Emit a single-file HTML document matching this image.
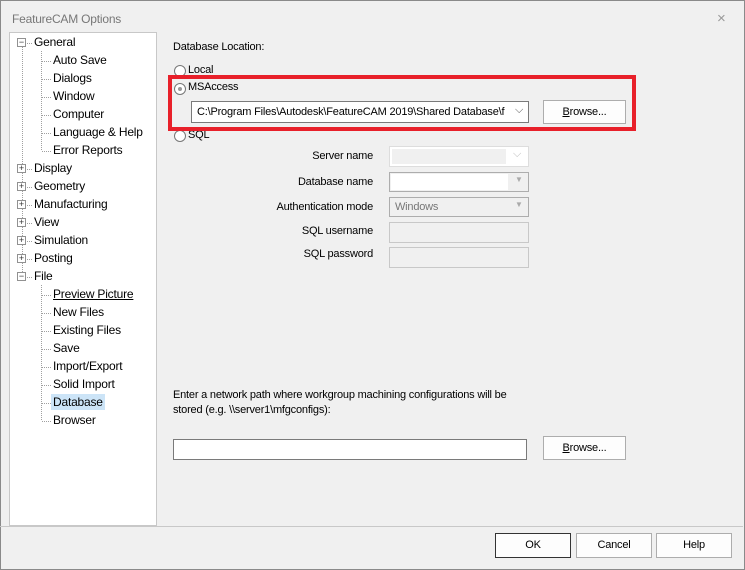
<html><head><style>
body{margin:0;width:745px;height:570px;background:#f0f0f0;font-family:"Liberation Sans",sans-serif;font-size:11px;letter-spacing:-0.2px;color:#000;position:relative;overflow:hidden}
.a{position:absolute;white-space:nowrap}
.win{position:absolute;left:0;top:0;width:743px;height:568px;border:1px solid #8a8a8a}
.tree{position:absolute;left:9px;top:32px;width:146px;height:492px;background:#fff;border:1px solid #c8c8c8}
.box{position:absolute;background:#fff;border:1px solid #7a7a7a;box-sizing:border-box;overflow:hidden}
.dis{position:absolute;background:#f0f0f0;border:1px solid #c8c8c8;box-sizing:border-box}
.btn{position:absolute;background:#fdfdfd;border:1px solid #adadad;box-sizing:border-box;text-align:center;line-height:22px}
.pm{position:absolute;width:9px;height:9px;border:1px solid #919191;box-sizing:border-box;background:#fff;font-size:9px;line-height:7px;text-align:center;color:#333;letter-spacing:0}
.rad{position:absolute;width:12px;height:12px;border:1px solid #777;border-radius:50%;box-sizing:border-box;background:#fff}
.r{text-align:right;width:200px}
</style></head><body>
<div class="win"></div>
<div class="a" style="left:12px;top:12px;color:#777;font-size:12px">FeatureCAM Options</div>
<div class="a" style="left:717px;top:10px;color:#999;font-size:15px">×</div>
<div class="tree">
<svg class="a" style="left:0;top:0" width="146" height="492">
<g stroke="#a0a0a0" stroke-dasharray="1,1" fill="none">
<line x1="12.5" y1="14" x2="12.5" y2="240"/>
<line x1="31.5" y1="18" x2="31.5" y2="118"/>
<line x1="31.5" y1="252" x2="31.5" y2="388"/>
<line x1="17" y1="10.5" x2="22" y2="10.5"/>
</g>
<g stroke="#a0a0a0" stroke-dasharray="1,1">
<path d="M32 28.5h9M32 46.5h9M32 64.5h9M32 82.5h9M32 100.5h9M32 118.5h9M17 136.5h5M17 154.5h5M17 172.5h5M17 190.5h5M17 208.5h5M17 226.5h5M17 244.5h5M32 262.5h9M32 280.5h9M32 298.5h9M32 316.5h9M32 334.5h9M32 352.5h9M32 370.5h9M32 388.5h9"/>
</g></svg>
</div>
<div class="pm" style="left:17px;top:38px">−</div>
<div class="pm" style="left:17px;top:164px">+</div>
<div class="pm" style="left:17px;top:182px">+</div>
<div class="pm" style="left:17px;top:200px">+</div>
<div class="pm" style="left:17px;top:218px">+</div>
<div class="pm" style="left:17px;top:236px">+</div>
<div class="pm" style="left:17px;top:254px">+</div>
<div class="pm" style="left:17px;top:272px">−</div>
<div class="a" style="left:34px;top:35px;font-size:12px">General</div>
<div class="a" style="left:53px;top:53px;font-size:12px">Auto Save</div>
<div class="a" style="left:53px;top:71px;font-size:12px">Dialogs</div>
<div class="a" style="left:53px;top:89px;font-size:12px">Window</div>
<div class="a" style="left:53px;top:107px;font-size:12px">Computer</div>
<div class="a" style="left:53px;top:125px;font-size:12px">Language &amp; Help</div>
<div class="a" style="left:53px;top:143px;font-size:12px">Error Reports</div>
<div class="a" style="left:34px;top:161px;font-size:12px">Display</div>
<div class="a" style="left:34px;top:179px;font-size:12px">Geometry</div>
<div class="a" style="left:34px;top:197px;font-size:12px">Manufacturing</div>
<div class="a" style="left:34px;top:215px;font-size:12px">View</div>
<div class="a" style="left:34px;top:233px;font-size:12px">Simulation</div>
<div class="a" style="left:34px;top:251px;font-size:12px">Posting</div>
<div class="a" style="left:34px;top:269px;font-size:12px">File</div>
<div class="a" style="left:53px;top:287px;font-size:12px;text-decoration:underline">Preview Picture</div>
<div class="a" style="left:53px;top:305px;font-size:12px">New Files</div>
<div class="a" style="left:53px;top:323px;font-size:12px">Existing Files</div>
<div class="a" style="left:53px;top:341px;font-size:12px">Save</div>
<div class="a" style="left:53px;top:359px;font-size:12px">Import/Export</div>
<div class="a" style="left:53px;top:377px;font-size:12px">Solid Import</div>
<div class="a" style="left:51px;top:394px;font-size:12px;background:#cce4f7;padding:1px 2px">Database</div>
<div class="a" style="left:53px;top:413px;font-size:12px">Browser</div>

<div class="a" style="left:173px;top:41px">Database Location:</div>
<div class="rad" style="left:174px;top:65px"></div><div class="a" style="left:188px;top:64px">Local</div>
<div class="rad" style="left:174px;top:83px"><div style="position:absolute;left:3px;top:3px;width:4px;height:4px;border-radius:50%;background:#999"></div></div><div class="a" style="left:188px;top:81px">MSAccess</div>
<div class="rad" style="left:174px;top:130px"></div><div class="a" style="left:188px;top:129px">SQL</div>
<div class="a" style="left:168px;top:75px;width:460px;height:48px;border:4px solid #e8202a"></div>
<div class="box" style="left:191px;top:101px;width:338px;height:22px"><span class="a" style="left:5px;top:4px;width:312px;overflow:hidden">C:\Program Files\Autodesk\FeatureCAM 2019\Shared Database\f</span><span class="a" style="left:323px;top:2px;color:#555">⌵</span></div>
<div class="btn" style="left:543px;top:100px;width:83px;height:24px"><u>B</u>rowse...</div>

<div class="a r" style="left:173px;top:150px">Server name</div>
<div class="a r" style="left:173px;top:176px">Database name</div>
<div class="a r" style="left:173px;top:201px">Authentication mode</div>
<div class="a r" style="left:173px;top:225px">SQL username</div>
<div class="a r" style="left:173px;top:248px">SQL password</div>
<div class="dis" style="left:389px;top:146px;width:140px;height:21px;background:#fff;border-color:#ddd"><span class="a" style="left:2px;top:2px;width:114px;height:15px;background:#f0f0f0"></span><span class="a" style="left:123px;top:1px;color:#bbb">⌵</span></div>
<div class="dis" style="left:389px;top:172px;width:140px;height:20px;border-color:#adadad"><span class="a" style="left:1px;top:1px;width:117px;height:16px;background:#fff"></span><span class="a" style="left:125px;top:2px;color:#aaa;font-size:8px">▼</span></div>
<div class="dis" style="left:389px;top:197px;width:140px;height:20px;border-color:#adadad"><span class="a" style="left:5px;top:3px;color:#777">Windows</span><span class="a" style="left:125px;top:2px;color:#aaa;font-size:8px">▼</span></div>
<div class="dis" style="left:389px;top:222px;width:140px;height:21px"></div>
<div class="dis" style="left:389px;top:247px;width:140px;height:21px"></div>

<div class="a" style="left:173px;top:389px">Enter a network path where workgroup machining configurations will be</div>
<div class="a" style="left:173px;top:404px">stored (e.g. \\server1\mfgconfigs):</div>
<div class="box" style="left:173px;top:439px;width:354px;height:21px"></div>
<div class="btn" style="left:543px;top:436px;width:83px;height:24px"><u>B</u>rowse...</div>

<div class="a" style="left:0;top:526px;width:743px;height:1px;background:#c8c8c8"></div>
<div class="btn" style="left:495px;top:533px;width:76px;height:25px;border:1px solid #333">OK</div>
<div class="btn" style="left:576px;top:533px;width:76px;height:25px">Cancel</div>
<div class="btn" style="left:656px;top:533px;width:76px;height:25px">Help</div>
</body></html>
